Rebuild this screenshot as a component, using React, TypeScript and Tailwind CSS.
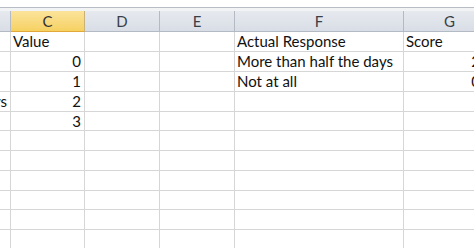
const cols = [
  { key: "B", w: "w-[11px]" },
  { key: "C", w: "w-[74px]" },
  { key: "D", w: "w-[75px]" },
  { key: "E", w: "w-[75px]" },
  { key: "F", w: "w-[169px]" },
  { key: "G", w: "w-[80px]" },
]

type Cell = { text: string; right?: boolean }

const rows: { h: string; cells: Record<string, Cell> }[] = [
  { h: "h-[20px]", cells: { C: { text: "Value" }, F: { text: "Actual Response" }, G: { text: "Score" } } },
  { h: "h-[20px]", cells: { C: { text: "0", right: true }, F: { text: "More than half the days" }, G: { text: "2", right: true } } },
  { h: "h-[20px]", cells: { C: { text: "1", right: true }, F: { text: "Not at all" }, G: { text: "0", right: true } } },
  { h: "h-[20px]", cells: { B: { text: "days", right: true }, C: { text: "2", right: true } } },
  { h: "h-[19px]", cells: { C: { text: "3", right: true } } },
  { h: "h-[20px]", cells: {} },
  { h: "h-[20px]", cells: {} },
  { h: "h-[20px]", cells: {} },
  { h: "h-[19px]", cells: {} },
  { h: "h-[20px]", cells: {} },
  { h: "h-[20px]", cells: {} },
]

export default function App() {
  return (
    <div className="w-[474px] h-[248px] overflow-hidden bg-white text-[#111] font-['Lato','Liberation_Sans',sans-serif]">
      {/* strip above the sheet */}
      <div className="h-[7px] bg-white" />
      <div className="h-[1px] bg-[#b8bdc5]" />
      <div className="h-[3px] bg-[#f2f3f5]" />

      {/* column headers */}
      <div className="flex h-[21px] w-max">
        {cols.map((c) => (
          <div
            key={c.key}
            className={`${c.w} shrink-0 flex items-center justify-center border-r border-b text-[15px] ${
              c.key === "C"
                ? "bg-gradient-to-b from-[#fbe39a] to-[#f6d161] border-b-[#e2a93a] border-r-[#c9b27a] text-[#333]"
                : "bg-gradient-to-b from-[#e6eaef] to-[#d9dee6] border-[#b3bac4] text-[#3a3f47]"
            } ${c.key === "G" ? "pl-[12px]" : ""}`}
          >
            {c.key !== "B" && c.key}
          </div>
        ))}
      </div>

      {/* grid */}
      {rows.map((r, i) => (
        <div key={i} className={`flex ${r.h} w-max`}>
          {cols.map((c) => {
            const cell = r.cells[c.key]
            return (
              <div
                key={c.key}
                className={`${c.w} shrink-0 flex items-center overflow-hidden whitespace-nowrap border-r border-b border-[#d6d6d6] text-[15px] leading-none ${
                  cell?.right ? "justify-end pr-[3px]" : "justify-start pl-[2px]"
                }`}
              >
                {cell?.text}
              </div>
            )
          })}
        </div>
      ))}
    </div>
  )
}
